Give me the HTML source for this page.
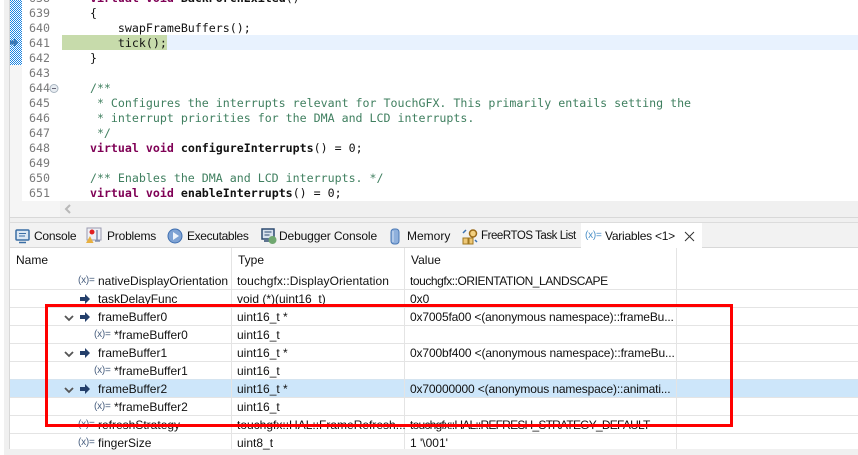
<!DOCTYPE html>
<html><head><meta charset="utf-8"><style>
html,body{margin:0;padding:0;background:#fff;overflow:hidden}
#p{position:relative;width:858px;height:455px;overflow:hidden;background:#fff}
#p div{position:absolute}
.c{font:11.62px/15px "DejaVu Sans Mono","Liberation Mono",monospace;white-space:pre;color:#111;left:62px}
.n{font:11.62px/15px "DejaVu Sans Mono","Liberation Mono",monospace;color:#787878;left:29px}
.k{color:#7f0055;font-weight:bold}.b{font-weight:bold}.g{color:#3f7f5f}
.t{font:12px/16px "Liberation Sans",sans-serif;white-space:nowrap;color:#111}
.h{height:1px;background:#e4e4e4;left:10px;width:848px}
svg{position:absolute}
.x{font:10px/14px "Liberation Sans",sans-serif;color:#4a6080;white-space:nowrap;letter-spacing:-.2px}
</style></head><body><div id="p">
<div style="left:4px;top:0;width:5px;height:455px;background:#f0f0f0"></div>
<div style="left:9px;top:0;width:1px;height:455px;background:#d8d8d8"></div>
<div style="left:10px;top:65px;width:12px;height:136px;background:#f5f5f5"></div>
<svg style="left:10px;top:0" width="12" height="65"><defs><pattern id="ck" width="2" height="2" patternUnits="userSpaceOnUse"><rect width="2" height="2" fill="#fff"/><rect width="1" height="1" fill="#1d86e2"/><rect x="1" y="1" width="1" height="1" fill="#1d86e2"/></pattern></defs><rect width="12" height="65" fill="url(#ck)"/></svg>
<div style="left:62px;top:35px;width:796px;height:15px;background:#e8f2fe"></div>
<div style="left:62px;top:35px;width:105px;height:15px;background:#c7dbab"></div>
<svg style="left:10px;top:38px" width="8" height="9"><path d="M0 2.500h4V0l4 4.500L4 9V6.500H0z" fill="#3a78b5"/></svg>

<div class="n" style="top:-9px">638</div><div class="c" style="top:-9px">    <span class="k">virtual void</span> <span class="b">BackPorchExited</span>()</div>
<div class="n" style="top:6px">639</div><div class="c" style="top:6px">    {</div>
<div class="n" style="top:21px">640</div><div class="c" style="top:21px">        swapFrameBuffers();</div>
<div class="n" style="top:36px">641</div><div class="c" style="top:36px">        tick();</div>
<div class="n" style="top:51px">642</div><div class="c" style="top:51px">    }</div>
<div class="n" style="top:66px">643</div>
<div class="n" style="top:81px">644</div><div class="c g" style="top:81px">    /**</div>
<svg style="left:49px;top:84px" width="11" height="9"><circle cx="5" cy="4.500" r="4" fill="#e8edf2" stroke="#a8b4c0"/><path d="M3 4.500h4" stroke="#667"/></svg>
<div class="n" style="top:96px">645</div><div class="c g" style="top:96px">     * Configures the interrupts relevant for TouchGFX. This primarily entails setting the</div>
<div class="n" style="top:111px">646</div><div class="c g" style="top:111px">     * interrupt priorities for the DMA and LCD interrupts.</div>
<div class="n" style="top:126px">647</div><div class="c g" style="top:126px">     */</div>
<div class="n" style="top:141px">648</div><div class="c" style="top:141px">    <span class="k">virtual void</span> <span class="b">configureInterrupts</span>() = 0;</div>
<div class="n" style="top:156px">649</div>
<div class="n" style="top:171px">650</div><div class="c g" style="top:171px">    /** Enables the DMA and LCD interrupts. */</div>
<div class="n" style="top:186px">651</div><div class="c" style="top:186px">    <span class="k">virtual void</span> <span class="b">enableInterrupts</span>() = 0;</div>

<div style="left:10px;top:201px;width:50px;height:16px;background:#f5f5f5"></div>
<div style="left:60px;top:201px;width:798px;height:16px;background:#f0f0f0"></div>
<svg style="left:64px;top:204px" width="8" height="10"><path d="M6 1L2 5l4 4" fill="none" stroke="#b8b8b8" stroke-width="2"/></svg>
<div style="left:10px;top:217px;width:848px;height:1px;background:#d8d8d8"></div>
<div style="left:10px;top:218px;width:848px;height:4px;background:#f0f0f0"></div>
<div style="left:10px;top:222px;width:848px;height:26px;background:#f2f2f2;border-top:1px solid #dcdcdc;box-sizing:border-box"></div>
<div style="left:10px;top:247px;width:848px;height:1px;background:#d8d8d8"></div>
<div style="left:581px;top:223px;width:121px;height:25px;background:#fff"></div>

<svg style="left:15px;top:229px" width="15" height="15"><rect x="1" y="1" width="13" height="10" rx="1" fill="#dbe7f3" stroke="#3a6ea5" stroke-width="1.500"/><path d="M4 4.500h7M4 7h6" stroke="#3a6ea5"/><path d="M4 13.500h7" stroke="#3a6ea5" stroke-width="1.500"/></svg>
<div class="t" style="left:34px;top:228px;letter-spacing:-.25px">Console</div>
<svg style="left:86px;top:227px" width="16" height="17"><rect x="1" y="1" width="14" height="12" fill="#eef0f5" stroke="#9a9ab0"/><circle cx="6" cy="5" r="2.500" fill="#e02020"/><path d="M11 3v11M9 14h5" stroke="#8090b0" stroke-width="1.500"/><path d="M4 9l3.500 7H0z" fill="#e8b040"/></svg>
<div class="t" style="left:107px;top:228px;letter-spacing:-.2px">Problems</div>
<svg style="left:167px;top:228px" width="16" height="16"><circle cx="8" cy="8" r="7" fill="#7fa3d4" stroke="#3f6fb0"/><path d="M6 4l6 4-6 4z" fill="#f0f5fb"/></svg>
<div class="t" style="left:187px;top:228px;letter-spacing:-.35px">Executables</div>
<svg style="left:261px;top:228px" width="16" height="17"><rect x="1" y="1" width="12" height="10" fill="#d8e2ee" stroke="#2c4a70" stroke-width="1.500"/><path d="M3.500 4h7M3.500 7h5" stroke="#2c4a70"/><path d="M3 13h8" stroke="#2c4a70" stroke-width="1.500"/><circle cx="11.500" cy="12" r="4" fill="#70a870"/></svg>
<div class="t" style="left:279px;top:228px;letter-spacing:-.13px">Debugger Console</div>
<svg style="left:390px;top:228px" width="10" height="17"><rect x="1" y="1" width="8" height="15" rx="3" fill="#8fb0dc" stroke="#4a78b5"/><path d="M3 3v11" stroke="#d5e2f3"/></svg>
<div class="t" style="left:407px;top:228px">Memory</div>
<svg style="left:462px;top:228px" width="16" height="17"><rect x="1" y="10" width="5" height="6" fill="#eec878" stroke="#a07820"/><rect x="7" y="10" width="4" height="6" fill="#eec878" stroke="#a07820"/><circle cx="11" cy="5.500" r="3.500" fill="#f2d080" stroke="#9a6a18" stroke-width="1.500"/><path d="M1 5l3-3M13 12l2 2" stroke="#3a70b0" stroke-width="1.500"/></svg>
<div class="t" style="left:481px;top:228px;font-size:11.5px;letter-spacing:-.45px">FreeRTOS Task List</div>
<div style="left:585px;top:229px;font:10px/14px 'Liberation Sans',sans-serif;color:#4a90c8;letter-spacing:-.2px">(x)=</div>
<div class="t" style="left:605px;top:228px;letter-spacing:-.25px">Variables &lt;1&gt;</div>
<svg style="left:684px;top:231px" width="11" height="11"><path d="M1 1l9 9M10 1l-9 9" stroke="#333" stroke-width="1"/></svg>

<div style="left:10px;top:379px;width:848px;height:18px;background:#cde6fa"></div>
<div class="h" style="top:289px"></div><div class="h" style="top:307px"></div><div class="h" style="top:325px"></div><div class="h" style="top:343px"></div><div class="h" style="top:361px"></div><div class="h" style="top:379px;background:#d5e4f0"></div><div class="h" style="top:397px"></div><div class="h" style="top:415px"></div><div class="h" style="top:433px"></div>
<div style="left:231px;top:248px;width:1px;height:201px;background:#e4e4e4"></div>
<div style="left:404px;top:248px;width:1px;height:201px;background:#e4e4e4"></div>
<div style="left:676px;top:248px;width:1px;height:201px;background:#e4e4e4"></div>
<div style="left:4px;top:449px;width:854px;height:6px;background:#f0f0f0"></div>

<div class="t" style="left:16px;top:252px">Name</div><div class="t" style="left:238px;top:252px">Type</div><div class="t" style="left:411px;top:252px">Value</div>

<div class="x" style="left:78px;top:274px">(x)=</div><div class="t" style="left:98px;top:273px">nativeDisplayOrientation</div><div class="t" style="left:237px;top:273px;letter-spacing:.07px">touchgfx::DisplayOrientation</div><div class="t" style="left:410px;top:273px;letter-spacing:-.45px">touchgfx::ORIENTATION_LANDSCAPE</div>
<svg style="left:80px;top:294px" width="10" height="10"><path d="M0 3h5V0l5 5-5 5V7H0z" fill="#243f6b"/></svg><div class="t" style="left:98px;top:291px">taskDelayFunc</div><div class="t" style="left:237px;top:291px">void (*)(uint16_t)</div><div class="t" style="left:410px;top:291px">0x0</div>

<svg style="left:64px;top:315px" width="10" height="7"><path d="M1 1l4 4 4-4" fill="none" stroke="#555" stroke-width="1.800"/></svg><svg style="left:80px;top:312px" width="10" height="10"><path d="M0 3h5V0l5 5-5 5V7H0z" fill="#243f6b"/></svg><div class="t" style="left:98px;top:309px">frameBuffer0</div><div class="t" style="left:237px;top:309px">uint16_t *</div><div class="t" style="left:410px;top:309px;letter-spacing:-.15px">0x7005fa00 &lt;(anonymous namespace)::frameBu...</div>
<div class="x" style="left:94px;top:328px">(x)=</div><div class="t" style="left:114px;top:327px">*frameBuffer0</div><div class="t" style="left:237px;top:327px">uint16_t</div>

<svg style="left:64px;top:351px" width="10" height="7"><path d="M1 1l4 4 4-4" fill="none" stroke="#555" stroke-width="1.800"/></svg><svg style="left:80px;top:348px" width="10" height="10"><path d="M0 3h5V0l5 5-5 5V7H0z" fill="#243f6b"/></svg><div class="t" style="left:98px;top:345px">frameBuffer1</div><div class="t" style="left:237px;top:345px">uint16_t *</div><div class="t" style="left:410px;top:345px;letter-spacing:-.13px">0x700bf400 &lt;(anonymous namespace)::frameBu...</div>
<div class="x" style="left:94px;top:364px">(x)=</div><div class="t" style="left:114px;top:363px">*frameBuffer1</div><div class="t" style="left:237px;top:363px">uint16_t</div>

<svg style="left:64px;top:387px" width="10" height="7"><path d="M1 1l4 4 4-4" fill="none" stroke="#555" stroke-width="1.800"/></svg><svg style="left:80px;top:384px" width="10" height="10"><path d="M0 3h5V0l5 5-5 5V7H0z" fill="#243f6b"/></svg><div class="t" style="left:98px;top:381px">frameBuffer2</div><div class="t" style="left:237px;top:381px">uint16_t *</div><div class="t" style="left:410px;top:381px;letter-spacing:-.15px">0x70000000 &lt;(anonymous namespace)::animati...</div>
<div class="x" style="left:94px;top:400px">(x)=</div><div class="t" style="left:114px;top:399px">*frameBuffer2</div><div class="t" style="left:237px;top:399px">uint16_t</div>

<div class="x" style="left:78px;top:418px">(x)=</div><div class="t" style="left:98px;top:417px">refreshStrategy</div><div class="t" style="left:237px;top:417px">touchgfx::HAL::FrameRefresh...</div><div class="t" style="left:410px;top:417px;letter-spacing:-.77px">touchgfx::HAL::REFRESH_STRATEGY_DEFAULT</div>
<div class="x" style="left:78px;top:436px">(x)=</div><div class="t" style="left:98px;top:435px">fingerSize</div><div class="t" style="left:237px;top:435px">uint8_t</div><div class="t" style="left:410px;top:435px">1 '\001'</div>

<div style="left:45px;top:304px;width:688px;height:123px;border:3px solid #f00;box-sizing:border-box"></div>
</div></body></html>
